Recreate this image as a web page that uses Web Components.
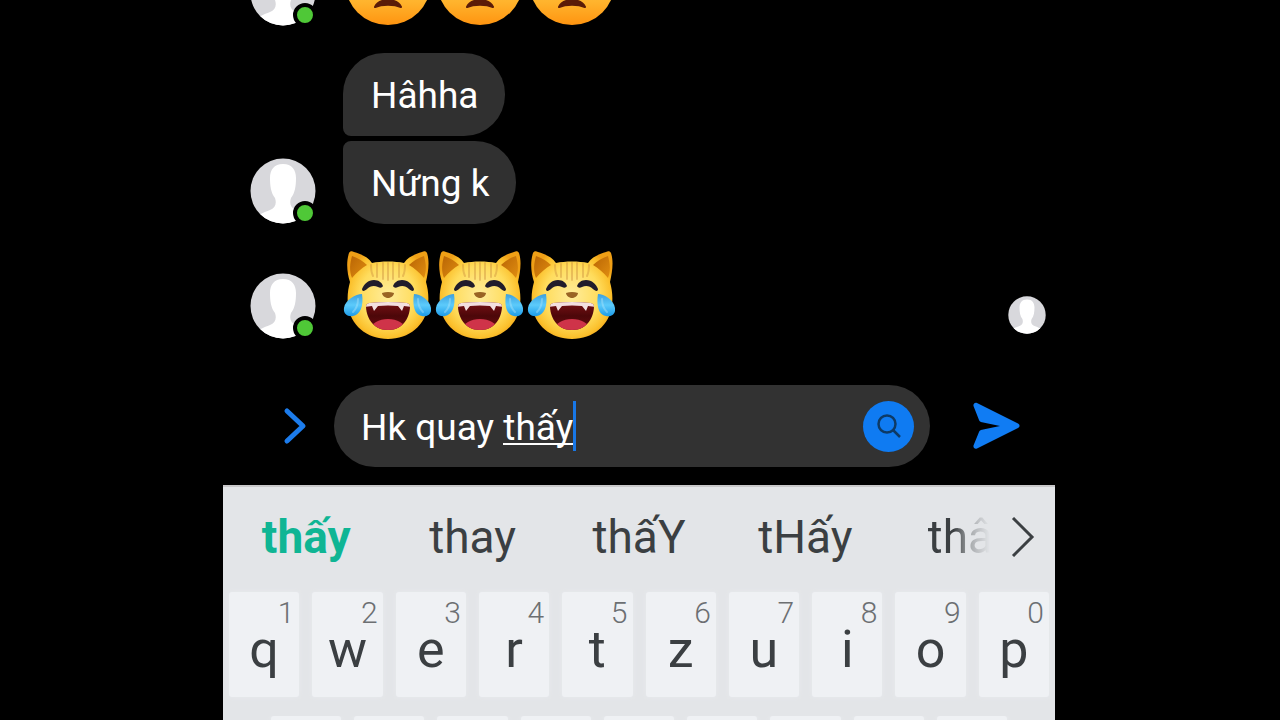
<!DOCTYPE html>
<html lang="vi">
<head>
<meta charset="utf-8">
<meta name="viewport" content="width=device-width, initial-scale=1">
<title>Chat</title>
<style>
  body {
    margin: 0;
    background: #000;
    font-family: Roboto, "Noto Sans", sans-serif;
  }
</style>
</head>
<body>
<chat-screen>
  <message-row slot="thread" avatar>
    <sad-emoji></sad-emoji>
    <sad-emoji></sad-emoji>
    <sad-emoji></sad-emoji>
  </message-row>
  <message-row slot="thread" class="first">
    <message-bubble position="first">Hâhha</message-bubble>
  </message-row>
  <message-row slot="thread" class="last" avatar>
    <message-bubble position="last">Nứng k</message-bubble>
  </message-row>
  <message-row slot="thread" avatar seen>
    <cat-emoji></cat-emoji>
    <cat-emoji></cat-emoji>
    <cat-emoji></cat-emoji>
  </message-row>
  <message-composer slot="composer" value="Hk quay thấy"></message-composer>
  <suggestion-bar slot="keyboard" words="thấy thay thấY tHấy thâ"></suggestion-bar>
  <key-row slot="keyboard" keys="qwertzuiop" hints="1234567890"></key-row>
  <key-row slot="keyboard" keys="asdfghjkl" peek></key-row>
</chat-screen>

<script>
class ChatScreen extends HTMLElement {
  constructor() {
    super();
    this.attachShadow({ mode: 'open' });
    this.shadowRoot.innerHTML = `
      <style>
        :host {
          display: grid;
          grid-template-columns: 223fr 832fr 225fr;
          height: 100vh;
          overflow: hidden;
        }
        .phone {
          grid-column: 2;
          display: flex;
          flex-direction: column;
          min-width: 0;
          min-height: 0;
        }
        .thread {
          flex: 1;
          min-height: 0;
          display: flex;
          flex-direction: column;
          justify-content: flex-end;
          gap: 27px;
          padding-bottom: 46px;
          overflow: hidden;
        }
        ::slotted(.last) {
          margin-top: -22px;
        }
        .keyboard {
          flex: none;
          margin-top: 18px;
          background: #e3e5e8;
          border-top: 2px solid #c9c8ca;
        }
      </style>
      <main class="phone">
        <section class="thread"><slot name="thread"></slot></section>
        <slot name="composer"></slot>
        <section class="keyboard"><slot name="keyboard"></slot></section>
      </main>
    `;
  }
}

class UserAvatar extends HTMLElement {
  constructor() {
    super();
    this.attachShadow({ mode: 'open' });
    this.shadowRoot.innerHTML = `
      <style>
        :host {
          display: block;
          position: relative;
          width: 66px;
          height: 66px;
        }
        :host([small]) {
          width: 38px;
          height: 38px;
        }
        svg {
          display: block;
          width: 100%;
          height: 100%;
        }
        .dot {
          display: none;
          position: absolute;
          right: -1px;
          bottom: -1px;
          width: 16px;
          height: 16px;
          border: 4px solid #000;
          border-radius: 50%;
          background: #4fc837;
        }
        :host([online]) .dot {
          display: block;
        }
      </style>
      <svg viewBox="0 0 66 66" aria-hidden="true">
        <defs><clipPath id="round"><circle cx="33" cy="33" r="32.5"/></clipPath></defs>
        <g clip-path="url(#round)">
          <rect width="66" height="66" fill="#d8d8dc"/>
          <path fill="#fff" d="M33 6c-9 0-13 6-13 14 0 8 1 15 5 20 2 6 0 10-5 12-7 3-12 3-17 14h60c-5-11-10-11-17-14-5-2-7-6-5-12 4-5 5-12 5-20 0-8-4-14-13-14z"/>
        </g>
      </svg>
      <span class="dot"></span>
    `;
  }
}

class MessageRow extends HTMLElement {
  constructor() {
    super();
    this.attachShadow({ mode: 'open' });
  }

  connectedCallback() {
    this.shadowRoot.innerHTML = `
      <style>
        :host {
          display: grid;
          grid-template-columns: 66px 1fr auto;
          column-gap: 27px;
          align-items: end;
          flex: none;
          padding: 0 9px 0 27px;
        }
        .content {
          grid-column: 2;
          display: flex;
          gap: 4px;
        }
        .seen {
          margin-bottom: 5px;
        }
      </style>
      ${this.hasAttribute('avatar') ? '<user-avatar online></user-avatar>' : ''}
      <div class="content"><slot></slot></div>
      ${this.hasAttribute('seen') ? '<user-avatar class="seen" small></user-avatar>' : ''}
    `;
  }
}

class MessageBubble extends HTMLElement {
  constructor() {
    super();
    this.attachShadow({ mode: 'open' });
    this.shadowRoot.innerHTML = `
      <style>
        :host {
          display: block;
          padding: 21px 27px 18px 28px;
          background: #303030;
          color: #fff;
          font-size: 37px;
          line-height: 44px;
          border-radius: 41px;
        }
        :host([position="first"]) {
          border-bottom-left-radius: 8px;
        }
        :host([position="last"]) {
          border-top-left-radius: 8px;
        }
      </style>
      <slot></slot>
    `;
  }
}

class SadEmoji extends HTMLElement {
  constructor() {
    super();
    this.attachShadow({ mode: 'open' });
    this.shadowRoot.innerHTML = `
      <style>
        :host { display: block; width: 88px; height: 88px; }
        svg { display: block; }
      </style>
      <svg width="88" height="88" viewBox="0 0 88 88" aria-hidden="true">
        <defs>
          <linearGradient id="skin" x1="0" y1="0" x2="0" y2="1">
            <stop offset="0" stop-color="#ef5a3c"/>
            <stop offset=".72" stop-color="#ffb52e"/>
            <stop offset="1" stop-color="#ff9410"/>
          </linearGradient>
        </defs>
        <circle cx="45" cy="44" r="43" fill="url(#skin)"/>
        <circle cx="29" cy="44" r="5" fill="#4a1a08"/>
        <circle cx="61" cy="44" r="5" fill="#4a1a08"/>
        <path d="M32 69c4-9 22-9 26 0-7-3-19-3-26 0z" fill="#5b1c08" stroke="#5b1c08" stroke-width="2" stroke-linejoin="round"/>
      </svg>
    `;
  }
}

class CatEmoji extends HTMLElement {
  constructor() {
    super();
    this.attachShadow({ mode: 'open' });
    this.shadowRoot.innerHTML = `
      <style>
        :host { display: block; width: 88px; height: 88px; }
        svg { display: block; }
      </style>
      <svg width="88" height="88" viewBox="-1 0 88 88" aria-hidden="true">
        <defs>
          <radialGradient id="fur" cx=".5" cy=".5" r=".56">
            <stop offset="0" stop-color="#ffec9a"/>
            <stop offset=".6" stop-color="#ffdc5c"/>
            <stop offset=".86" stop-color="#fbc02c"/>
            <stop offset="1" stop-color="#ef9f16"/>
          </radialGradient>
          <linearGradient id="ear" x1="0" y1="0" x2="1" y2="1">
            <stop offset="0" stop-color="#b96505"/>
            <stop offset="1" stop-color="#e08d10"/>
          </linearGradient>
          <linearGradient id="tear" x1="0" y1="0" x2="0" y2="1">
            <stop offset="0" stop-color="#3d9fdd"/>
            <stop offset=".5" stop-color="#5ccbfb"/>
            <stop offset="1" stop-color="#1d9be8"/>
          </linearGradient>
          <linearGradient id="mouth" x1="0" y1="0" x2="0" y2="1">
            <stop offset="0" stop-color="#7c1216"/>
            <stop offset=".5" stop-color="#4c0709"/>
            <stop offset="1" stop-color="#6e0c12"/>
          </linearGradient>
          <clipPath id="jaws"><path d="M22 55q0-2 3-3 19-2 38 0 3 1 3 3c0 10-6 24-22 24S22 65 22 55z"/></clipPath>
        </defs>
        <path fill="url(#fur)" d="M5 2c1-2 3-2 5-1 7 2 14 5 18 11 9-2 23-2 32 0C64 6 71 3 78 1c2-1 4-1 5 1 3 9 1 20-1 29 2 7 3 15 2 23-2 20-19 34-40 34S6 74 4 54c-1-8 0-16 2-23C3 22 2 11 5 2z"/>
        <path fill="url(#ear)" d="M8 5c6 2 11 5 15 9-5 3-11 8-15 13C5 20 6 12 8 5z"/>
        <path fill="url(#ear)" d="M80 5c-6 2-11 5-15 9 5 3 11 8 15 13 3-7 2-15 0-22z"/>
        <g fill="none" stroke="#c98a3a" stroke-width="2" stroke-linecap="round" opacity=".4">
          <path d="M27 14q0 7 2 11M33 13v13M39 12v16M44 12v17M49 12v16M55 13v13M61 14q0 7-2 11"/>
        </g>
        <g fill="#211c2b">
          <path d="M18 38c2-5 6-9 12-9 5 0 8 3 9 6-1 2-3 2-5 1-4-2-8-1-11 2-2 2-5 3-5 0z"/>
          <path d="M70 38c-2-5-6-9-12-9-5 0-8 3-9 6 1 2 3 2 5 1 4-2 8-1 11 2 2 2 5 3 5 0z"/>
        </g>
        <path fill="#9a6424" d="M38 42q6-2 12 0c0 3-4 5-6 5s-6-2-6-5z"/>
        <g clip-path="url(#jaws)">
          <rect x="20" y="50" width="48" height="30" fill="url(#mouth)"/>
          <ellipse cx="44" cy="78" rx="17" ry="10" fill="#cf3349"/>
          <path fill="#f3dfe0" d="M20 50h48v6l-8-1-2 5-4-5q-10-1-20 0l-4 5-2-5-8 1z"/>
        </g>
        <path fill="url(#tear)" d="M18 43C12 43 1 49 0 57c-1 6 4 9 9 8 7-1 11-10 9-22z"/>
        <path fill="url(#tear)" d="M70 43c6 0 16 6 17 14 1 6-4 9-9 8-7-1-10-10-8-22z"/>
        <path fill="none" stroke="#b4e6fa" stroke-width="2" stroke-linecap="round" opacity=".4" d="M14 48q0 8-5 13M74 48q0 8 5 13"/>
      </svg>
    `;
  }
}

class MessageComposer extends HTMLElement {
  constructor() {
    super();
    this.attachShadow({ mode: 'open' });
  }

  connectedCallback() {
    this.shadowRoot.innerHTML = `
      <style>
        :host {
          display: grid;
          grid-template-columns: 111px 1fr 125px;
          align-items: center;
          flex: none;
        }
        button {
          display: grid;
          place-items: center;
          margin: 0;
          padding: 0;
          border: 0;
          background: none;
          cursor: pointer;
        }
        svg { display: block; }
        .expand {
          justify-self: end;
          width: 52px;
          height: 52px;
          margin-right: 13px;
        }
        .send {
          justify-self: start;
          margin-left: 43px;
        }
        .field {
          display: flex;
          align-items: center;
          gap: 12px;
          height: 82px;
          padding: 0 16px 0 27px;
          box-sizing: border-box;
          border-radius: 41px;
          background: #323232;
        }
        .text {
          position: relative;
          flex: 1;
          min-width: 0;
        }
        input {
          display: block;
          box-sizing: border-box;
          width: 100%;
          height: 50px;
          margin: 0;
          padding: 2px 0 0;
          border: 0;
          outline: 0;
          background: none;
          color: #fff;
          font: 37px/48px Roboto, "Noto Sans", sans-serif;
          caret-color: transparent;
        }
        .composing {
          position: absolute;
          left: var(--start);
          width: var(--length);
          bottom: 6px;
          height: 2px;
          background: #fff;
          pointer-events: none;
        }
        .caret {
          position: absolute;
          left: var(--end);
          top: 0;
          width: 3px;
          height: 50px;
          background: #1877e6;
          pointer-events: none;
        }
        .search {
          width: 51px;
          height: 51px;
          border-radius: 50%;
          background: #0f7bf2;
        }
      </style>
      <button class="expand" type="button" aria-label="Mở rộng">
        <svg width="24" height="38" viewBox="0 0 24 38" fill="none" stroke="#1c7cec" stroke-width="5" stroke-linecap="round" stroke-linejoin="round">
          <path d="M4 4l16 15L4 34"/>
        </svg>
      </button>
      <div class="field">
        <div class="text">
          <input type="text" aria-label="Tin nhắn" autocomplete="off" spellcheck="false">
          <span class="composing"></span>
          <span class="caret"></span>
        </div>
        <button class="search" type="button" aria-label="Tìm kiếm">
          <svg width="26" height="26" viewBox="0 0 26 26" fill="none" stroke="#0d3a66" stroke-width="2.500">
            <circle cx="11" cy="11" r="8.500"/>
            <path d="M17 17l7 7"/>
          </svg>
        </button>
      </div>
      <button class="send" type="button" aria-label="Gửi">
        <svg width="48" height="48" viewBox="0 0 48 48" fill="#107cf3">
          <path d="M.5 4C0 1.500 2 .3 4 1l41 20.500c2 1 2 3.500 0 4.500L4 46.500c-2 .8-4-.5-3.500-3L6 30c.6-1.500 1.500-2 3-2.300L27 24 9 20.300c-1.500-.3-2.400-.8-3-2.300z"/>
        </svg>
      </button>
    `;
    this.input = this.shadowRoot.querySelector('input');
    this.input.value = this.getAttribute('value') || '';
    this.input.addEventListener('input', () => this.updateComposing());
    this.updateComposing();
  }

  // Underline the last word and keep the caret behind it
  updateComposing() {
    const ctx = document.createElement('canvas').getContext('2d');
    ctx.font = '37px Roboto, "Noto Sans", sans-serif';
    const text = this.input.value;
    const start = Math.round(ctx.measureText(text.slice(0, text.lastIndexOf(' ') + 1)).width);
    const end = Math.round(ctx.measureText(text).width);
    const box = this.shadowRoot.querySelector('.text');
    box.style.setProperty('--start', start + 'px');
    box.style.setProperty('--length', (end - start) + 'px');
    box.style.setProperty('--end', end + 'px');
  }
}

class SuggestionBar extends HTMLElement {
  constructor() {
    super();
    this.attachShadow({ mode: 'open' });
  }

  connectedCallback() {
    const words = this.getAttribute('words').split(' ');
    const last = words.pop();
    this.shadowRoot.innerHTML = `
      <style>
        :host {
          display: grid;
          grid-template-columns: repeat(5, minmax(0, 1fr));
          align-items: center;
          height: 99px;
          padding-bottom: 6px;
        }
        button {
          margin: 0;
          padding: 0;
          border: 0;
          background: none;
          color: #3b3f42;
          font: 46px/56px Roboto, "Noto Sans", sans-serif;
          cursor: pointer;
        }
        .best {
          color: #0fb594;
          font-weight: 700;
        }
        .end {
          display: flex;
          align-items: center;
          justify-content: space-between;
          padding: 0 20px 0 39px;
        }
        .faded {
          -webkit-mask-image: linear-gradient(90deg, #000 40%, rgba(0, 0, 0, .35) 65%, transparent 95%);
          mask-image: linear-gradient(90deg, #000 40%, rgba(0, 0, 0, .35) 65%, transparent 95%);
        }
        svg { display: block; }
      </style>
      ${words.map((word, i) => `<button type="button"${i === 0 ? ' class="best"' : ''}>${word}</button>`).join('')}
      <div class="end">
        <button class="faded" type="button">${last}</button>
        <button type="button" aria-label="Thêm gợi ý">
          <svg width="24" height="40" viewBox="0 0 24 40" fill="none" stroke="#3b3f42" stroke-width="3">
            <path d="M2 1l19 19L2 39"/>
          </svg>
        </button>
      </div>
    `;
  }
}

class KeyRow extends HTMLElement {
  constructor() {
    super();
    this.attachShadow({ mode: 'open' });
  }

  connectedCallback() {
    const keys = [...this.getAttribute('keys')];
    const hints = [...(this.getAttribute('hints') || '')];
    const peek = this.hasAttribute('peek');
    this.shadowRoot.innerHTML = `
      <style>
        :host {
          display: grid;
          grid-template-columns: repeat(${keys.length}, minmax(0, 1fr));
          gap: 13px;
          padding: 0 6px 19px;
        }
        :host([peek]) {
          height: 4px;
          padding: 0 48px;
          overflow: hidden;
        }
        button {
          display: flex;
          flex-direction: column;
          height: 105px;
          margin: 0;
          padding: 6px 5px 0;
          border: 0;
          border-radius: 3px;
          background: #eff1f4;
          box-shadow: 0 0 4px #e9ebee;
          color: #3b3f42;
          font-family: inherit;
          cursor: pointer;
        }
        .hint {
          align-self: flex-end;
          color: #6c6f72;
          font-size: 30px;
          line-height: 30px;
          font-weight: 300;
        }
        .key {
          align-self: center;
          font-size: 52px;
          line-height: 44px;
        }
      </style>
      ${keys.map((key, i) => peek
        ? `<button type="button" aria-label="${key}"></button>`
        : `<button type="button"><span class="hint">${hints[i]}</span><span class="key">${key}</span></button>`).join('')}
    `;
  }
}

customElements.define('user-avatar', UserAvatar);
customElements.define('message-row', MessageRow);
customElements.define('message-bubble', MessageBubble);
customElements.define('sad-emoji', SadEmoji);
customElements.define('cat-emoji', CatEmoji);
customElements.define('message-composer', MessageComposer);
customElements.define('suggestion-bar', SuggestionBar);
customElements.define('key-row', KeyRow);
customElements.define('chat-screen', ChatScreen);
</script>
</body>
</html>
